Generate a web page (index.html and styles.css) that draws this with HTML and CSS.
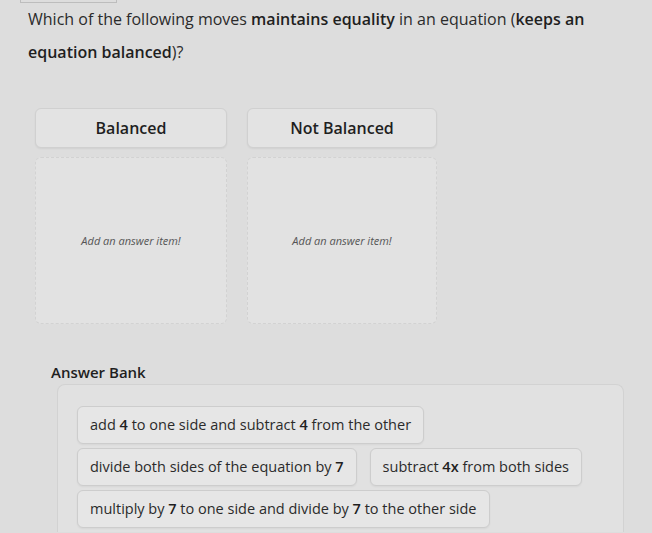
FILE: index.html
```html
<!DOCTYPE html>
<html lang="en">
<head>
    <meta charset="UTF-8">
    <meta name="viewport" content="width=device-width, initial-scale=1.0">
    <link rel="stylesheet" href="styles.css">
</head>
<body>
    <div class="top-stub"></div>

    <p class="question">
        Which of the following moves <b>maintains equality</b> in an equation (<b>keeps an</b><br>
        <b>equation balanced</b>)?
    </p>

    <div class="categories">
        <div class="category">
            <div class="category-title">Balanced</div>
            <div class="drop-zone"><span>Add an answer item!</span></div>
        </div>
        <div class="category">
            <div class="category-title">Not Balanced</div>
            <div class="drop-zone"><span>Add an answer item!</span></div>
        </div>
    </div>

    <h3 class="bank-title">Answer Bank</h3>
    <div class="bank">
        <div class="item">add <b>4</b> to one side and subtract <b>4</b> from the other</div>
        <div class="item">divide both sides of the equation by <b>7</b></div>
        <div class="item">subtract <b>4<i>x</i></b> from both sides</div>
        <div class="item">multiply by <b>7</b> to one side and divide by <b>7</b> to the other side</div>
    </div>
</body>
</html>
```

FILE: styles.css
```css
body {
    margin: 0;
    font-family: "Open Sans", "Noto Sans", sans-serif;
    background-color: #dddddd;
    color: #2b2b2b;
    height: 533px;
    overflow: hidden;
}

b {
    font-weight: 600;
    color: #1f1f1f;
}

.top-stub {
    width: 95px;
    height: 2px;
    margin-left: 20px;
    border: 1px solid #bdbdbd;
    border-top: none;
}

.question {
    margin: 0 0 0 28px;
    width: 590px;
    font-size: 16px;
    line-height: 33px;
}

.categories {
    display: grid;
    grid-template-columns: 192px 190px;
    column-gap: 20px;
    margin: 39px 0 0 35px;
}

.category-title {
    height: 38px;
    display: flex;
    align-items: center;
    justify-content: center;
    font-size: 16px;
    font-weight: 600;
    color: #1f1f1f;
    background-color: #e3e3e3;
    border: 1px solid #d0d0d0;
    border-radius: 6px;
    box-shadow: 0 1px 2px rgba(0, 0, 0, 0.06);
}

.drop-zone {
    height: 165px;
    margin-top: 9px;
    display: flex;
    align-items: center;
    justify-content: center;
    background-color: #e2e2e2;
    border: 1px dashed #d2d2d2;
    border-radius: 6px;
}

.drop-zone span {
    font-size: 11px;
    font-style: italic;
    color: #555;
}

.bank-title {
    margin: 38px 0 0 51px;
    font-size: 15px;
    line-height: 20px;
    font-weight: 600;
    color: #1f1f1f;
}

/* the bank keeps going below the fold, so no bottom edge */
.bank {
    width: 527px;
    height: 126px;
    margin: 2px 0 0 57px;
    padding: 21px 19px 0;
    display: flex;
    flex-wrap: wrap;
    align-content: flex-start;
    gap: 4px 13px;
    background-color: #e1e1e1;
    border: 1px solid #d2d2d2;
    border-bottom: none;
    border-radius: 8px 8px 0 0;
}

.item {
    padding: 8px 12px;
    font-size: 14.5px;
    line-height: 20px;
    background-color: #e6e6e6;
    border: 1px solid #cdcdcd;
    border-radius: 6px;
    box-shadow: 0 1px 2px rgba(0, 0, 0, 0.05);
}

.item i {
    font-style: normal;
}
```
